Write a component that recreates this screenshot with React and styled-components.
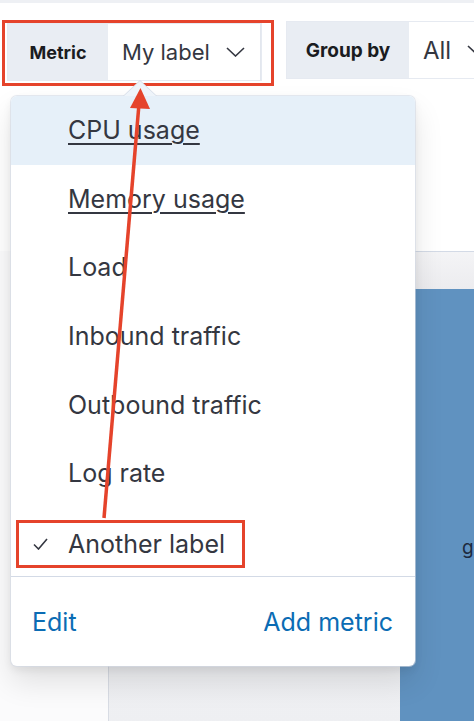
import React from 'react';
import styled, { createGlobalStyle } from 'styled-components';

const GlobalStyle = createGlobalStyle`
  html, body {
    margin: 0;
    padding: 0;
    background: #ffffff;
  }
  body {
    font-family: Inter, "Noto Sans", "Liberation Sans", sans-serif;
    -webkit-font-smoothing: antialiased;
  }
`;

const RED = '#e5432b';

const Page = styled.div`
  position: relative;
  width: 474px;
  height: 721px;
  overflow: hidden;
  background: #ffffff;
`;

const TopStrip = styled.div`
  height: 3px;
  background: #eef0f4;
`;

const Toolbar = styled.div`
  display: flex;
  align-items: flex-start;
  gap: 13px;
  padding: 17px 0 0 2px;
`;

const Marked = styled.div`
  display: flex;
  border: 3px solid ${RED};
  padding: 1px 10px 3px 3px;
`;

const Control = styled.div`
  display: flex;
  height: 56px;
  margin-top: ${(p) => p.$offset || 0}px;
  box-shadow: 0 0 0 1px #e6eaf1;
  background: #ffffff;
  flex-shrink: 0;
`;

const Prepend = styled.div`
  display: flex;
  align-items: center;
  justify-content: center;
  width: ${(p) => p.$width}px;
  background: #e9edf3;
  color: #1a1c21;
  font-size: ${(p) => p.$size || 18}px;
  font-weight: 700;
`;

const Value = styled.div`
  display: flex;
  align-items: center;
  gap: 16px;
  width: ${(p) => p.$width}px;
  padding-left: 14px;
  box-sizing: border-box;
  color: #343741;
  font-size: ${(p) => p.$size || 22}px;
  border-right: 1px solid #e3e7ee;
`;

const Workspace = styled.div`
  display: flex;
  height: 474px;
  margin-top: 165px;
`;

const Gutter = styled.div`
  width: 108px;
  flex-shrink: 0;
  border-right: 1px solid #d8dce4;
  background: #fbfbfc;
`;

const Panel = styled.div`
  flex: 1;
  display: flex;
  flex-direction: column;
  border-top: 1px solid #d3dae6;
  background: #f1f2f5;
`;

const PanelHeader = styled.div`
  height: 37px;
  background: linear-gradient(#f4f4f6, #ececef);
`;

const PanelBody = styled.div`
  flex: 1;
  display: flex;
`;

const Empty = styled.div`
  flex: 1;
  background: linear-gradient(#f7f7f9, #eeeff2);
`;

const Bar = styled.div`
  width: 74px;
  background: #6092c0;
  position: relative;
  overflow: hidden;
`;

const BarLabel = styled.span`
  display: block;
  padding: 247px 0 0 62px;
  color: #1d2a3e;
  font-size: 19px;
  white-space: nowrap;
`;

const Popover = styled.div`
  position: absolute;
  left: 11px;
  top: 96px;
  width: 404px;
  background: #ffffff;
  border-radius: 6px;
  box-shadow: 0 0 0 1px rgba(211, 218, 230, 0.6), 0 16px 30px rgba(0, 0, 0, 0.11),
    0 4px 8px rgba(0, 0, 0, 0.07);

  &::before {
    content: '';
    position: absolute;
    left: 112px;
    top: -16px;
    width: 0;
    height: 0;
    border-left: 17px solid transparent;
    border-right: 17px solid transparent;
    border-bottom: 16px solid #d6dde8;
  }
  &::after {
    content: '';
    position: absolute;
    left: 113px;
    top: -15px;
    width: 0;
    height: 0;
    border-left: 16px solid transparent;
    border-right: 16px solid transparent;
    border-bottom: 15px solid #eef4fa;
  }
`;

const List = styled.div`
  display: flex;
  flex-direction: column;
  border-radius: 6px 6px 0 0;
  overflow: hidden;
`;

const Item = styled.div`
  display: flex;
  align-items: center;
  height: 68.6px;
  padding-left: ${(p) => (p.$marked ? 5 : 22)}px;
  background: ${(p) => (p.$active ? '#e6f0f9' : '#ffffff')};
  color: #343741;
  font-size: 25px;
`;

const CheckSlot = styled.span`
  display: flex;
  align-items: center;
  width: 35px;
  flex-shrink: 0;
`;

const ItemText = styled.span`
  text-decoration: ${(p) => (p.$underline ? 'underline' : 'none')};
  text-decoration-thickness: 2px;
  text-underline-offset: 4px;
`;

const MarkedItem = styled.span`
  display: flex;
  align-items: center;
  border: 3px solid ${RED};
  padding: 6px 17px 6px 14px;
  line-height: 30px;
  margin-top: 4px;
`;

const Footer = styled.div`
  display: flex;
  align-items: center;
  justify-content: space-between;
  height: 89px;
  padding: 0 22px 0 21px;
  border-top: 1px solid #d3dae6;
`;

const LinkButton = styled.span`
  color: #0b6cb4;
  font-size: 25px;
`;

const Annotation = styled.svg`
  position: absolute;
  left: 0;
  top: 0;
  pointer-events: none;
`;

const Chevron = () => (
  <svg width="19" height="10" viewBox="0 0 19 10" fill="none">
    <path d="M1 1l8.5 8 8.5-8" stroke="#343741" strokeWidth="1.6" />
  </svg>
);

const Check = () => (
  <svg width="15" height="12" viewBox="0 0 15 12" fill="none">
    <path d="M1 6.5l4.5 4.5L14 1" stroke="#343741" strokeWidth="1.6" />
  </svg>
);

const metrics = [
  { label: 'CPU usage', active: true, underline: true },
  { label: 'Memory usage', underline: true },
  { label: 'Load' },
  { label: 'Inbound traffic' },
  { label: 'Outbound traffic' },
  { label: 'Log rate' },
];

export default function App() {
  return (
    <Page>
      <GlobalStyle />
      <TopStrip />
      <Toolbar>
        <Marked>
          <Control>
            <Prepend $width={100}>Metric</Prepend>
            <Value $width={153}>
              My label
              <Chevron />
            </Value>
          </Control>
        </Marked>
        <Control $offset={2}>
          <Prepend $width={122} $size={19}>Group by</Prepend>
          <Value $width={120} $size={24}>
            All
            <Chevron />
          </Value>
        </Control>
      </Toolbar>

      <Workspace>
        <Gutter />
        <Panel>
          <PanelHeader />
          <PanelBody>
            <Empty />
            <Bar>
              <BarLabel>g</BarLabel>
            </Bar>
          </PanelBody>
        </Panel>
      </Workspace>

      <Popover>
        <List>
          {metrics.map((m) => (
            <Item key={m.label} $active={m.active}>
              <CheckSlot />
              <ItemText $underline={m.underline}>{m.label}</ItemText>
            </Item>
          ))}
          <Item $marked>
            <MarkedItem>
              <CheckSlot>
                <Check />
              </CheckSlot>
              <ItemText>Another label</ItemText>
            </MarkedItem>
          </Item>
        </List>
        <Footer>
          <LinkButton>Edit</LinkButton>
          <LinkButton>Add metric</LinkButton>
        </Footer>
      </Popover>

      <Annotation width="474" height="721" viewBox="0 0 474 721">
        <line x1="104" y1="518" x2="139" y2="104" stroke={RED} strokeWidth="3.5" />
        <path d="M140.5 88L150 109L130 108Z" fill={RED} />
      </Annotation>
    </Page>
  );
}
